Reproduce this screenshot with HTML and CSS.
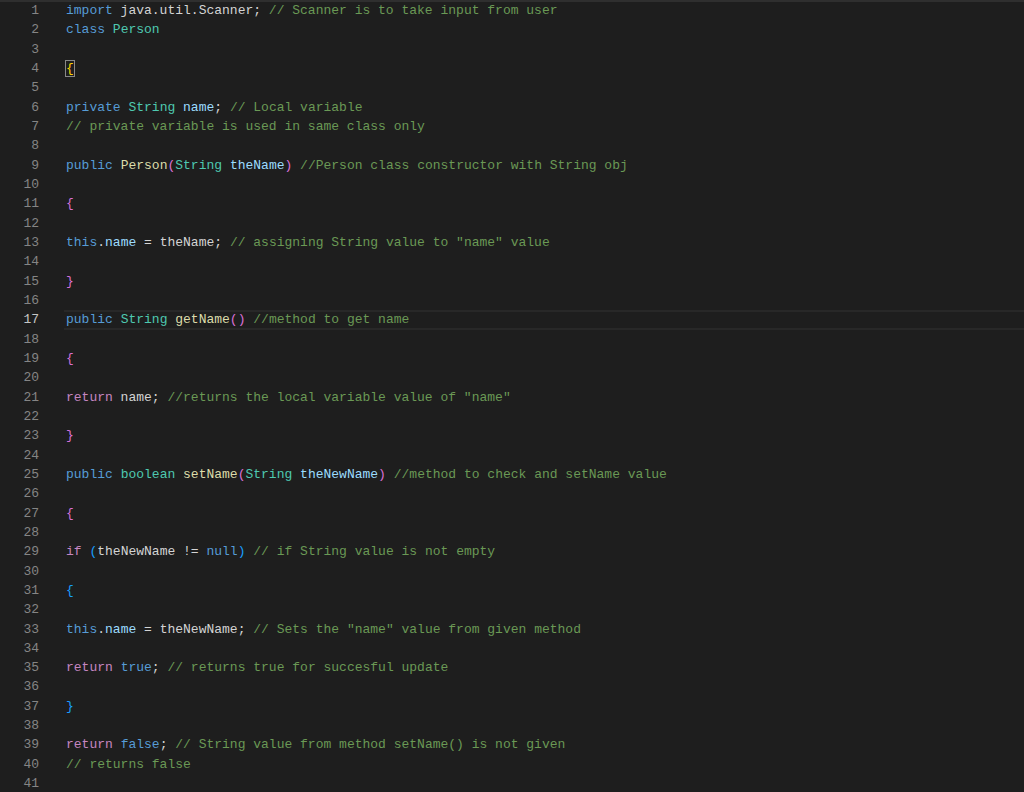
FILE: index.html
```html
<!DOCTYPE html>
<html>

<head>
    <title>Person.java</title>
    <link rel="stylesheet" href="styles.css">
</head>

<body>
    <div class="editor">
        <div class="line"><span class="num">1</span><span class="code"><span class="kw">import</span> java.util.Scanner; <span class="cm">// Scanner is to take input from user</span></span></div>
        <div class="line"><span class="num">2</span><span class="code"><span class="kw">class</span> <span class="ty">Person</span></span></div>
        <div class="line"><span class="num">3</span><span class="code"></span></div>
        <div class="line"><span class="num">4</span><span class="code"><span class="b1 match">{</span></span></div>
        <div class="line"><span class="num">5</span><span class="code"></span></div>
        <div class="line"><span class="num">6</span><span class="code"><span class="kw">private</span> <span class="ty">String</span> <span class="var">name</span>; <span class="cm">// Local variable</span></span></div>
        <div class="line"><span class="num">7</span><span class="code"><span class="cm">// private variable is used in same class only</span></span></div>
        <div class="line"><span class="num">8</span><span class="code"></span></div>
        <div class="line"><span class="num">9</span><span class="code"><span class="kw">public</span> <span class="fn">Person</span><span class="b2">(</span><span class="ty">String</span> <span class="var">theName</span><span class="b2">)</span> <span class="cm">//Person class constructor with String obj</span></span></div>
        <div class="line"><span class="num">10</span><span class="code"></span></div>
        <div class="line"><span class="num">11</span><span class="code"><span class="b2">{</span></span></div>
        <div class="line"><span class="num">12</span><span class="code"></span></div>
        <div class="line"><span class="num">13</span><span class="code"><span class="kw">this</span>.<span class="var">name</span> = theName; <span class="cm">// assigning String value to "name" value</span></span></div>
        <div class="line"><span class="num">14</span><span class="code"></span></div>
        <div class="line"><span class="num">15</span><span class="code"><span class="b2">}</span></span></div>
        <div class="line"><span class="num">16</span><span class="code"></span></div>
        <div class="line current"><span class="num">17</span><span class="code"><span class="kw">public</span> <span class="ty">String</span> <span class="fn">getName</span><span class="b2">()</span> <span class="cm">//method to get name</span></span></div>
        <div class="line"><span class="num">18</span><span class="code"></span></div>
        <div class="line"><span class="num">19</span><span class="code"><span class="b2">{</span></span></div>
        <div class="line"><span class="num">20</span><span class="code"></span></div>
        <div class="line"><span class="num">21</span><span class="code"><span class="ctl">return</span> name; <span class="cm">//returns the local variable value of "name"</span></span></div>
        <div class="line"><span class="num">22</span><span class="code"></span></div>
        <div class="line"><span class="num">23</span><span class="code"><span class="b2">}</span></span></div>
        <div class="line"><span class="num">24</span><span class="code"></span></div>
        <div class="line"><span class="num">25</span><span class="code"><span class="kw">public</span> <span class="ty">boolean</span> <span class="fn">setName</span><span class="b2">(</span><span class="ty">String</span> <span class="var">theNewName</span><span class="b2">)</span> <span class="cm">//method to check and setName value</span></span></div>
        <div class="line"><span class="num">26</span><span class="code"></span></div>
        <div class="line"><span class="num">27</span><span class="code"><span class="b2">{</span></span></div>
        <div class="line"><span class="num">28</span><span class="code"></span></div>
        <div class="line"><span class="num">29</span><span class="code"><span class="ctl">if</span> <span class="b3">(</span>theNewName != <span class="kw">null</span><span class="b3">)</span> <span class="cm">// if String value is not empty</span></span></div>
        <div class="line"><span class="num">30</span><span class="code"></span></div>
        <div class="line"><span class="num">31</span><span class="code"><span class="b3">{</span></span></div>
        <div class="line"><span class="num">32</span><span class="code"></span></div>
        <div class="line"><span class="num">33</span><span class="code"><span class="kw">this</span>.<span class="var">name</span> = theNewName; <span class="cm">// Sets the "name" value from given method</span></span></div>
        <div class="line"><span class="num">34</span><span class="code"></span></div>
        <div class="line"><span class="num">35</span><span class="code"><span class="ctl">return</span> <span class="kw">true</span>; <span class="cm">// returns true for succesful update</span></span></div>
        <div class="line"><span class="num">36</span><span class="code"></span></div>
        <div class="line"><span class="num">37</span><span class="code"><span class="b3">}</span></span></div>
        <div class="line"><span class="num">38</span><span class="code"></span></div>
        <div class="line"><span class="num">39</span><span class="code"><span class="ctl">return</span> <span class="kw">false</span>; <span class="cm">// String value from method setName() is not given</span></span></div>
        <div class="line"><span class="num">40</span><span class="code"><span class="cm">// returns false</span></span></div>
        <div class="line"><span class="num">41</span><span class="code"></span></div>
    </div>
</body>

</html>
```

FILE: styles.css
```css
body {
    margin: 0;
    padding: 0;
    overflow: hidden;
    background-color: #1e1e1e;
}

.editor {
    height: 792px;
    box-sizing: border-box;
    padding-top: 1px;
    background-color: #1e1e1e;
    box-shadow: inset 0 2px 0 #2f2f2f;
    font-family: "Liberation Mono", "DejaVu Sans Mono", monospace;
    font-size: 13px;
    color: #d4d4d4;
}

.line {
    display: flex;
    height: 19.33px;
    line-height: 19.33px;
    white-space: pre;
}

.num {
    width: 39px;
    flex: none;
    text-align: right;
    color: #858585;
}

.code {
    flex: 1;
    margin-left: 25px;
    padding-left: 2px;
}

/* current line */
.current .num {
    color: #c6c6c6;
}

.current .code {
    box-sizing: border-box;
    border-top: 2px solid #282828;
    border-bottom: 2px solid #282828;
    line-height: 15.33px;
}

.kw {
    color: #569cd6;
}

.ctl {
    color: #c586c0;
}

.ty {
    color: #4ec9b0;
}

.fn {
    color: #dcdcaa;
}

.var {
    color: #9cdcfe;
}

.cm {
    color: #6a9955;
}

/* bracket pair colours */
.b1 {
    color: #ffd700;
}

.b2 {
    color: #da70d6;
}

.b3 {
    color: #179fff;
}

.match {
    outline: 1px solid #888888;
    outline-offset: 0;
}
```
